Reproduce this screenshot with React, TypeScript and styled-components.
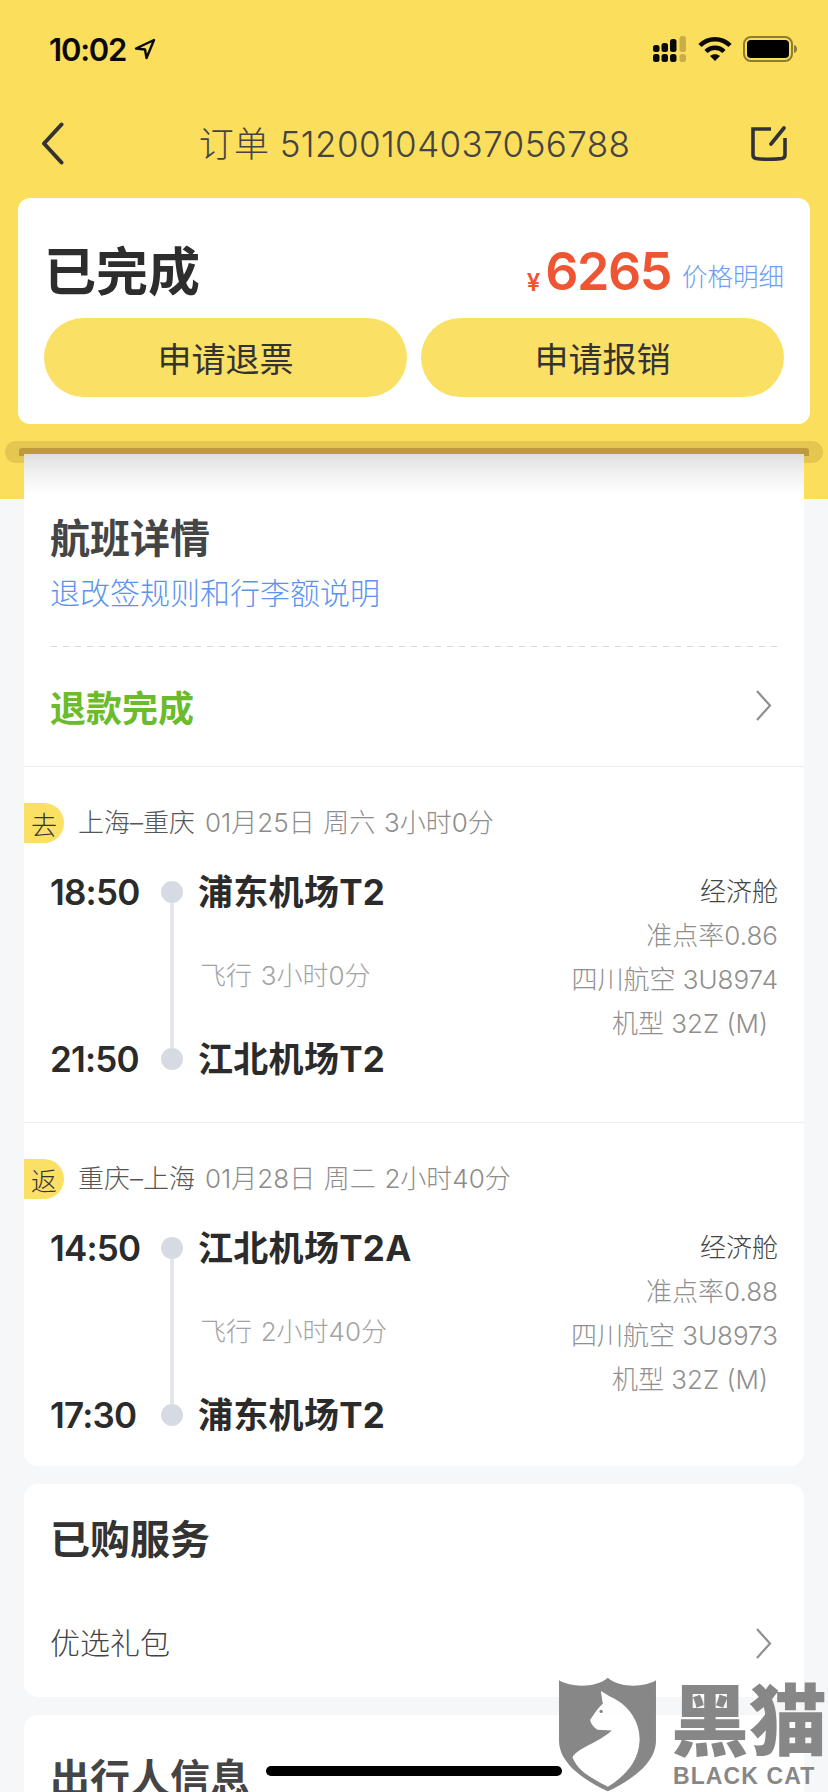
import React from "react";
import styled, { createGlobalStyle } from "styled-components";

const Global = createGlobalStyle`
  html, body { margin: 0; padding: 0; background: #f6f7f9; }
  * { box-sizing: border-box; }
  body { font-family: "Inter", "Noto Sans CJK SC", sans-serif; }
`;

const Page = styled.div`
  position: relative;
  width: 828px;
  height: 1792px;
  overflow: hidden;
  background: #f6f7f9;
`;
const Header = styled.header`
  height: 499px;
  background: #fade5c;
  display: flex;
  flex-direction: column;
`;
const StatusBar = styled.div`
  height: 98px;
  padding: 0 31px 0 49px;
  display: flex;
  align-items: center;
  justify-content: space-between;
`;
const Clock = styled.div`
  display: flex;
  align-items: center;
  gap: 8px;
  font-size: 31px;
  font-weight: 600;
  letter-spacing: -1.2px;
  color: #0a0a0a;
`;
const StatusIcons = styled.div`
  display: flex;
  align-items: center;
  gap: 11px;
`;
const NavBar = styled.nav`
  height: 90px;
  padding: 0 41px;
  display: flex;
  align-items: center;
  justify-content: space-between;
`;
const NavTitle = styled.h1`
  margin: 0 0 4px 14px;
  font-size: 35px;
  font-weight: 300;
  color: #444;
  letter-spacing: 0.4px;
`;
const SummaryCard = styled.section`
  margin: 10px 18px 0;
  height: 226px;
  border-radius: 12px;
  background: #fff;
  padding: 24px 26px 0;
`;
const SummaryTop = styled.div`
  height: 96px;
  display: flex;
  align-items: center;
  justify-content: space-between;
`;
const Status = styled.div`
  margin-bottom: 4px;
  font-size: 52px;
  font-weight: 700;
  color: #2d2d2d;
`;
const Price = styled.div`
  display: flex;
  align-items: center;
  margin-top: 4px;
  color: #ee5533;
  font-weight: 600;
`;
const Yen = styled.span`
  margin: 20px 5px 0 0;
  font-size: 24px;
`;
const Amount = styled.span`
  font-size: 52px;
  line-height: 60px;
  letter-spacing: -1.5px;
`;
const PriceLink = styled.span`
  margin: 5px 0 0 11px;
  font-size: 25.5px;
  font-weight: 300;
  color: #6c9ef5;
`;
const Buttons = styled.div`
  display: flex;
  gap: 14px;
`;
const Pill = styled.button`
  flex: 1;
  height: 79px;
  border: 0;
  border-radius: 40px;
  background: #fbe066;
  color: #333;
  font: inherit;
  font-size: 34px;
`;
const Slot = styled.div`
  margin: 17px 5px 0;
  height: 22px;
  border-radius: 11px;
  background: #e5c650;
  padding: 7px 14px 0;
`;
const SlotGroove = styled.div`
  height: 8px;
  border-radius: 3px 3px 0 0;
  background: #bf9a3d;
`;
const Body = styled.main`
  margin: -45px 24px 0;
  position: relative;
  display: flex;
  flex-direction: column;
  gap: 18px;
`;
const Card = styled.section`
  background: #fff;
  border-radius: 14px;
`;
const TicketCard = styled(Card)`
  border-radius: 0 0 14px 14px;
  background: linear-gradient(#dedfe0 0, #f2f2f3 20px, #fff 42px);
`;
const Details = styled.div`
  padding: 60px 26px 0;
`;
const DetailsTitle = styled.h2`
  margin: 0;
  font-size: 40px;
  line-height: 50px;
  font-weight: 700;
  color: #454545;
`;
const RuleLink = styled.div`
  margin-top: 9px;
  font-size: 30px;
  line-height: 40px;
  font-weight: 300;
  color: #5b93f0;
`;
const Dashed = styled.div`
  margin: 33px 0 0 1px;
  height: 1px;
  background: repeating-linear-gradient(to right, #d8d8d8 0 6px, transparent 6px 12px);
`;
const RefundRow = styled.div`
  height: 120px;
  padding: 0 32px 2px 26px;
  display: flex;
  align-items: center;
  justify-content: space-between;
  border-bottom: 1px solid #ececec;
`;
const RefundText = styled.span`
  font-size: 36px;
  font-weight: 700;
  color: #6cbb2b;
`;
const Segment = styled.div<{ $last?: boolean }>`
  padding: 36px 26px ${(p) => (p.$last ? "29px" : "41px")} 0;
  border-bottom: ${(p) => (p.$last ? "0" : "1px solid #ececec")};
`;
const SegmentHead = styled.div`
  display: flex;
  align-items: center;
  height: 40px;
  font-size: 26px;
  font-weight: 300;
  color: #8c8c8c;
`;
const Badge = styled.span`
  width: 40px;
  height: 40px;
  border-radius: 0 20px 20px 0;
  background: #fbe066;
  color: #333;
  display: flex;
  align-items: center;
  justify-content: center;
  margin-right: 14px;
`;
const Route = styled.span`
  margin: 0 10px 6px 0;
  color: #555;
`;
const HeadInfo = styled.span`
  margin-bottom: 6px;
  white-space: pre;
  word-spacing: -3px;
`;
const SegmentBody = styled.div`
  margin-top: 27px;
  height: 211px;
  display: flex;
  padding-left: 26px;
`;
const Column = styled.div`
  display: flex;
  flex-direction: column;
  justify-content: space-between;
`;
const Times = styled(Column)`
  width: 111px;
`;
const Time = styled.div`
  height: 44px;
  line-height: 44px;
  font-size: 35px;
  font-weight: 600;
  letter-spacing: -0.8px;
  color: #2b2b2b;
`;
const Rail = styled.div`
  width: 22px;
  padding: 11px 0;
  display: flex;
  flex-direction: column;
  align-items: center;
`;
const Dot = styled.span`
  width: 22px;
  height: 22px;
  flex: none;
  border-radius: 50%;
  background: #d6dbe3;
`;
const RailLine = styled.span`
  flex: 1;
  width: 4px;
  background: #e4e6eb;
`;
const Names = styled(Column)`
  margin-left: 15px;
`;
const Airport = styled.div`
  height: 44px;
  line-height: 44px;
  font-size: 35px;
  font-weight: 700;
  letter-spacing: 0.3px;
  color: #2b2b2b;
`;
const Duration = styled.div`
  padding-left: 2px;
  font-size: 26px;
  line-height: 40px;
  font-weight: 300;
  color: #a3a3a3;
  white-space: pre;
  word-spacing: -3px;
`;
const Meta = styled.div`
  margin-left: auto;
  text-align: right;
`;
const MetaLine = styled.div<{ $dark?: boolean; $inset?: boolean }>`
  height: 44px;
  line-height: 44px;
  font-size: 26px;
  font-weight: 300;
  color: ${(p) => (p.$dark ? "#444" : "#8f8f8f")};
  padding-right: ${(p) => (p.$inset ? "10px" : "0")};
`;
const ServicesCard = styled(Card)`
  height: 213px;
  padding: 31px 32px 0 26px;
`;
const SectionTitle = styled.h2`
  margin: 0;
  font-size: 40px;
  line-height: 50px;
  font-weight: 700;
  color: #333;
`;
const ServiceRow = styled.div`
  margin-top: 48px;
  height: 60px;
  display: flex;
  align-items: center;
  justify-content: space-between;
  font-size: 30px;
  font-weight: 300;
  color: #444;
`;
const ServiceName = styled.span`
  margin-bottom: 4px;
`;
const PassengerCard = styled(Card)`
  height: 120px;
  padding: 39px 26px 0;
`;
const HomeIndicator = styled.div`
  position: absolute;
  left: 266px;
  top: 1766px;
  width: 296px;
  height: 10px;
  border-radius: 5px;
  background: #000;
`;
const Watermark = styled.div`
  position: absolute;
  left: 559px;
  top: 1677px;
  width: 269px;
  height: 115px;
  display: flex;
  gap: 15px;
  opacity: 0.9;
  pointer-events: none;
`;
const MarkText = styled.div`
  display: flex;
  flex-direction: column;
  margin-top: 6px;
  color: #7b7b7b;
  white-space: nowrap;
`;
const MarkCn = styled.div`
  font-size: 78px;
  line-height: 78px;
  font-weight: 900;
`;
const MarkEn = styled.div`
  margin: 3px 0 0 2px;
  font-family: "Liberation Sans", sans-serif;
  font-size: 23px;
  line-height: 24px;
  font-weight: 700;
  letter-spacing: 1.1px;
`;

const Chevron = () => (
  <svg width="17" height="33" viewBox="0 0 17 33" fill="none">
    <path d="M2 2l13 14.500L2 31" stroke="#8f8f8f" strokeWidth="2.200" />
  </svg>
);

const SignalIcon = () => (
  <svg width="34" height="27" viewBox="0 0 34 27">
    <g fill="#0a0a0a">
      <rect x="0" y="9" width="6.500" height="7" rx="2.500" />
      <rect x="0" y="18" width="6.500" height="8" rx="2.500" />
      <rect x="8.500" y="7" width="6.500" height="9" rx="2.500" />
      <rect x="8.500" y="18" width="6.500" height="8" rx="2.500" />
      <rect x="17" y="3" width="6.500" height="13" rx="2.500" />
      <rect x="17" y="18" width="6.500" height="8" rx="2.500" />
    </g>
    <g fill="#c9ad4a">
      <rect x="26.500" y="0" width="6.500" height="16" rx="2.500" />
      <rect x="26.500" y="18" width="6.500" height="8" rx="2.500" />
    </g>
  </svg>
);

const WifiIcon = () => (
  <svg width="34" height="26" viewBox="0 0 34 26" fill="none" stroke="#0a0a0a" strokeWidth="4.500">
    <path d="M2 9.500C10 1 24 1 32 9.500" />
    <path d="M8 15.500C13 10.500 21 10.500 26 15.500" />
    <path d="M17 25l-5-5c3-2.500 7-2.500 10 0z" fill="#0a0a0a" stroke="none" />
  </svg>
);

const BatteryIcon = () => (
  <svg width="54" height="26" viewBox="0 0 54 26">
    <rect x="1" y="1" width="48" height="24" rx="7" fill="none" stroke="#8d7d33" strokeWidth="2" />
    <rect x="4" y="4" width="42" height="18" rx="4" fill="#000" />
    <path d="M51 9c2 .5 3 2 3 4s-1 3.500-3 4z" fill="#8d7d33" />
  </svg>
);

const LocationIcon = () => (
  <svg width="22" height="22" viewBox="0 0 22 22" fill="none">
    <path d="M20 2L2 10.500l9 1 1.500 8.500z" stroke="#0a0a0a" strokeWidth="2.400" strokeLinejoin="round" />
  </svg>
);

const BackIcon = () => (
  <svg width="23" height="43" viewBox="0 0 23 43" fill="none">
    <path d="M20.500 2.500L3 21.500l17.500 19" stroke="#333" strokeWidth="4" strokeLinecap="round" strokeLinejoin="round" />
  </svg>
);

const EditIcon = () => (
  <svg width="36" height="35" viewBox="0 0 36 35" fill="none" stroke="#2f3338" strokeWidth="3.600">
    <path d="M20 3H2v26c0 2 1 3 3 3.500 8 1 18 1 26 0 2-.5 3-1.500 3-3.500V12" />
    <path d="M33 2L20 18" strokeLinecap="round" />
  </svg>
);

const ShieldIcon = () => (
  <svg width="97" height="115" viewBox="237 110 290 344">
    <path
      d="M237 120C270 140 345 145 383 112C420 145 495 140 527 120V300C527 370 450 420 383 452C315 420 237 370 237 300Z"
      fill="#7b7b7b"
    />
    <path
      d="M362 152L392 170C440 190 480 240 478 300C476 365 430 410 383 438C340 415 295 395 277 350C295 320 350 310 395 270L352 268C340 260 332 250 330 238C340 225 350 205 368 190Z"
      fill="#fff"
    />
    <circle cx="363" cy="213" r="5" fill="#7b7b7b" />
  </svg>
);

type Leg = {
  badge: string;
  route: string;
  info: string;
  dep: [string, string];
  arr: [string, string];
  duration: string;
  onTime: string;
  flight: string;
};

const legs: Leg[] = [
  {
    badge: "去",
    route: "上海–重庆",
    info: "01月25日  周六  3小时0分",
    dep: ["18:50", "浦东机场T2"],
    arr: ["21:50", "江北机场T2"],
    duration: "飞行  3小时0分",
    onTime: "准点率0.86",
    flight: "四川航空 3U8974",
  },
  {
    badge: "返",
    route: "重庆–上海",
    info: "01月28日  周二  2小时40分",
    dep: ["14:50", "江北机场T2A"],
    arr: ["17:30", "浦东机场T2"],
    duration: "飞行  2小时40分",
    onTime: "准点率0.88",
    flight: "四川航空 3U8973",
  },
];

export default function App() {
  return (
    <Page>
      <Global />
      <Header>
        <StatusBar>
          <Clock>
            10:02
            <LocationIcon />
          </Clock>
          <StatusIcons>
            <SignalIcon />
            <WifiIcon />
            <BatteryIcon />
          </StatusIcons>
        </StatusBar>
        <NavBar>
          <BackIcon />
          <NavTitle>订单 51200104037056788</NavTitle>
          <EditIcon />
        </NavBar>
        <SummaryCard>
          <SummaryTop>
            <Status>已完成</Status>
            <Price>
              <Yen>¥</Yen>
              <Amount>6265</Amount>
              <PriceLink>价格明细</PriceLink>
            </Price>
          </SummaryTop>
          <Buttons>
            <Pill>申请退票</Pill>
            <Pill>申请报销</Pill>
          </Buttons>
        </SummaryCard>
        <Slot>
          <SlotGroove />
        </Slot>
      </Header>
      <Body>
        <TicketCard>
          <Details>
            <DetailsTitle>航班详情</DetailsTitle>
            <RuleLink>退改签规则和行李额说明</RuleLink>
            <Dashed />
          </Details>
          <RefundRow>
            <RefundText>退款完成</RefundText>
            <Chevron />
          </RefundRow>
          {legs.map((leg, i) => (
            <Segment key={leg.badge} $last={i === legs.length - 1}>
              <SegmentHead>
                <Badge>{leg.badge}</Badge>
                <Route>{leg.route}</Route>
                <HeadInfo>{leg.info}</HeadInfo>
              </SegmentHead>
              <SegmentBody>
                <Times>
                  <Time>{leg.dep[0]}</Time>
                  <Time>{leg.arr[0]}</Time>
                </Times>
                <Rail>
                  <Dot />
                  <RailLine />
                  <Dot />
                </Rail>
                <Names>
                  <Airport>{leg.dep[1]}</Airport>
                  <Duration>{leg.duration}</Duration>
                  <Airport>{leg.arr[1]}</Airport>
                </Names>
                <Meta>
                  <MetaLine $dark>经济舱</MetaLine>
                  <MetaLine>{leg.onTime}</MetaLine>
                  <MetaLine>{leg.flight}</MetaLine>
                  <MetaLine $inset>机型 32Z (M)</MetaLine>
                </Meta>
              </SegmentBody>
            </Segment>
          ))}
        </TicketCard>
        <ServicesCard>
          <SectionTitle>已购服务</SectionTitle>
          <ServiceRow>
            <ServiceName>优选礼包</ServiceName>
            <Chevron />
          </ServiceRow>
        </ServicesCard>
        <PassengerCard>
          <DetailsTitle>出行人信息</DetailsTitle>
        </PassengerCard>
      </Body>
      <HomeIndicator />
      <Watermark>
        <ShieldIcon />
        <MarkText>
          <MarkCn>黑猫</MarkCn>
          <MarkEn>BLACK CAT</MarkEn>
        </MarkText>
      </Watermark>
    </Page>
  );
}
